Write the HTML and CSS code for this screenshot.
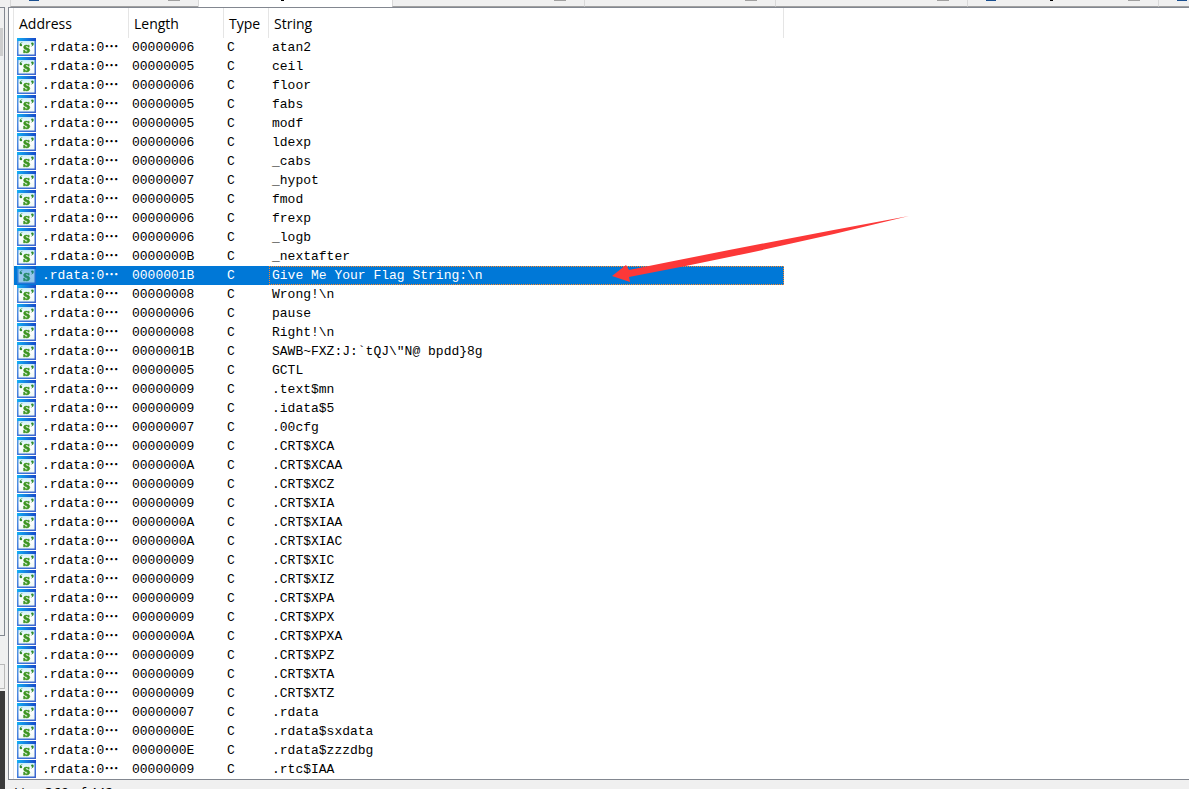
FILE: index.html
```html
<!DOCTYPE html>
<html lang="en">
<head>
    <meta charset="UTF-8">
    <meta name="viewport" content="width=device-width, initial-scale=1.0">
    <title>Strings window</title>
    <link rel="stylesheet" href="styles.css">
</head>
<body>
    <!-- the string icon, used by every row -->
    <svg class="defs" width="0" height="0">
        <defs>
            <linearGradient id="frame" x1="0" y1="0" x2="1" y2="1">
                <stop offset="0" stop-color="#5aa0e6"/>
                <stop offset="0.5" stop-color="#3f78dc"/>
                <stop offset="1" stop-color="#3a62cc"/>
            </linearGradient>
            <linearGradient id="bar" x1="0" y1="0" x2="1" y2="0">
                <stop offset="0" stop-color="#12b0f4"/>
                <stop offset="1" stop-color="#1848c8"/>
            </linearGradient>
            <linearGradient id="paper" x1="0" y1="0" x2="0" y2="1">
                <stop offset="0" stop-color="#c8ecf8"/>
                <stop offset="0.4" stop-color="#ffffff"/>
                <stop offset="1" stop-color="#eef8f4"/>
            </linearGradient>
            <symbol id="str" viewBox="0 0 19 19">
                <rect x="0" y="0" width="19" height="18" fill="url(#frame)"/>
                <rect x="0" y="0" width="19" height="3" fill="url(#bar)"/>
                <rect x="1.500" y="3" width="16" height="13.500" fill="url(#paper)"/>
                <path d="M12.200 9.300V7.200H11.400L11 7.500C8.500 6.500 6.600 7.500 6.600 9.300C6.600 12 10.500 11.300 10.500 13C10.500 14.200 8 14 7.500 12H6.600V14.900H7.400L7.900 14.500C10.500 15.500 12.800 14.500 12.800 12.300C12.800 9.600 8.700 10.300 8.700 8.800C8.700 7.700 10.900 7.700 11.400 9.300Z" fill="#3c9420" stroke="#3c9420" stroke-width="0.500"/>
                <path d="M5.300 4.200C3 4.800 2.300 6.300 2.700 7.600C3.200 8.800 5.300 8.500 5.200 7C5.100 6.200 4.500 5.900 4 6C4.200 5.200 4.700 4.800 5.500 4.600Z" fill="#2f8a2a"/>
                <path d="M14 8.600C16.300 8 17 6.500 16.600 5.200C16.100 4 14 4.300 14.100 5.800C14.200 6.600 14.800 6.900 15.300 6.800C15.100 7.600 14.600 8 13.800 8.200Z" fill="#2f8a2a"/>
            </symbol>
        </defs>
    </svg>

    <div class="tabs">
        <div class="tab first"><i class="mark"></i><i class="close"></i></div>
        <div class="tab active"><i class="tail"></i></div>
        <div class="tab"><i class="close"></i></div>
        <div class="tab"><i class="close"></i></div>
        <div class="tab"><i class="close"></i></div>
        <div class="tab titled"><i class="mark"></i><i class="tail"></i><i class="close"></i></div>
        <div class="tab last"><i class="mark"></i></div>
    </div>

    <div class="main">
        <div class="side">
            <div class="side-list"><div class="thumb"></div></div>
            <div class="side-box"></div>
            <div class="side-dark"></div>
        </div>
        <div class="view">
            <div class="panel">
                <table>
                    <colgroup>
                        <col class="c-address">
                        <col class="c-length">
                        <col class="c-type">
                        <col class="c-string">
                    </colgroup>
                    <thead>
                        <tr><th>Address</th><th>Length</th><th>Type</th><th>String</th></tr>
                    </thead>
                    <tbody id="rows"></tbody>
                </table>
                <svg class="arrow" viewBox="0 0 297 68">
                    <path d="M0 60L14 49L17 54Q150 27 297 0Q160 34 17 61L18 66Z" fill="#fc3838"/>
                </svg>
            </div>
            <div class="status">Line 369 of 442</div>
        </div>
    </div>

    <script>
        const strings = [
            ['00000006', 'atan2'],
            ['00000005', 'ceil'],
            ['00000006', 'floor'],
            ['00000005', 'fabs'],
            ['00000005', 'modf'],
            ['00000006', 'ldexp'],
            ['00000006', '_cabs'],
            ['00000007', '_hypot'],
            ['00000005', 'fmod'],
            ['00000006', 'frexp'],
            ['00000006', '_logb'],
            ['0000000B', '_nextafter'],
            ['0000001B', 'Give Me Your Flag String:\\n'],
            ['00000008', 'Wrong!\\n'],
            ['00000006', 'pause'],
            ['00000008', 'Right!\\n'],
            ['0000001B', 'SAWB~FXZ:J:`tQJ\\"N@ bpdd}8g'],
            ['00000005', 'GCTL'],
            ['00000009', '.text$mn'],
            ['00000009', '.idata$5'],
            ['00000007', '.00cfg'],
            ['00000009', '.CRT$XCA'],
            ['0000000A', '.CRT$XCAA'],
            ['00000009', '.CRT$XCZ'],
            ['00000009', '.CRT$XIA'],
            ['0000000A', '.CRT$XIAA'],
            ['0000000A', '.CRT$XIAC'],
            ['00000009', '.CRT$XIC'],
            ['00000009', '.CRT$XIZ'],
            ['00000009', '.CRT$XPA'],
            ['00000009', '.CRT$XPX'],
            ['0000000A', '.CRT$XPXA'],
            ['00000009', '.CRT$XPZ'],
            ['00000009', '.CRT$XTA'],
            ['00000009', '.CRT$XTZ'],
            ['00000007', '.rdata'],
            ['0000000E', '.rdata$sxdata'],
            ['0000000E', '.rdata$zzzdbg'],
            ['00000009', '.rtc$IAA']
        ];
        const selected = 12;

        const rows = document.getElementById('rows');
        strings.forEach(([length, text], i) => {
            const tr = document.createElement('tr');
            if (i === selected) tr.className = 'selected';
            tr.innerHTML = `
                <td><div class="address"><svg class="icon"><use href="#str"/></svg><span>.rdata:0<span class="dots" lang="zh-CN">…</span></span></div></td>
                <td>${length}</td>
                <td>C</td>
                <td class="text"></td>
            `;
            tr.querySelector('.text').textContent = text;
            rows.appendChild(tr);
        });
    </script>
</body>
</html>
```
FILE: styles.css
```css
* {
    box-sizing: border-box;
}
body {
    margin: 0;
    height: 100vh;
    display: flex;
    flex-direction: column;
    overflow: hidden;
    background-color: #f0f0f0;
    color: #000;
    font-family: "Open Sans", sans-serif;
    font-size: 14px;
}
.defs {
    position: absolute;
}

/* tab strip */
.tabs {
    display: flex;
    flex: none;
    height: 7px;
    padding-left: 10px;
}
.tab {
    display: flex;
    flex: 0 1 192px;
    padding: 0 18px;
    border-left: 1px solid #d9d9d9;
    border-bottom: 1px solid #a0a0a0;
}
.tab.first {
    flex-basis: 188px;
}
.tab.active {
    flex-basis: 195px;
    padding-right: 44px;
    background-color: #fff;
    border-bottom: none;
}
.tab.last {
    flex: 1 1 31px;
    padding: 0 0 0 18px;
}
.mark {
    width: 10px;
    height: 1px;
    background-color: #1a4f90;
}
.tail {
    width: 3px;
    height: 1px;
    margin: 0 auto;
    background-color: #000;
}
.close {
    width: 12px;
    height: 1px;
    margin-left: auto;
    background-color: #a0a0a0;
}
.titled .tail {
    margin-right: 75px;
}
.titled .close {
    margin-left: 0;
}

.main {
    display: flex;
    flex: 1;
    min-height: 0;
}
.side {
    display: flex;
    flex-direction: column;
    flex: none;
    width: 8px;
    padding-right: 3px;
}
.side-list {
    flex: 1;
    padding-top: 20px;
    border: 1px solid #828790;
    border-left: none;
}
.thumb {
    width: 3px;
    height: 28px;
    background-color: #cdcdcd;
}
.side-box {
    height: 25px;
    margin: 28px 0 2px;
    border: 1px solid #b9b9b9;
    border-left: none;
}
.side-dark {
    height: 98px;
    background-color: #3a3a3a;
}
.view {
    display: flex;
    flex: 1;
    flex-direction: column;
    min-width: 0;
}
.panel {
    position: relative;
    flex: 1;
    min-height: 0;
    overflow: hidden;
    padding-left: 4px;
    border: 1px solid #828790;
    border-right: none;
    background-color: #fff;
}

/* strings list */
table {
    width: 771px;
    border-collapse: separate;
    border-spacing: 0;
    border-left: 1px solid #e5e5e5;
    table-layout: fixed;
}
.c-address {
    width: 115px;
}
.c-length {
    width: 95px;
}
.c-type {
    width: 45px;
}
th {
    height: 30px;
    padding: 0 5px;
    border-right: 1px solid #e5e5e5;
    font-weight: normal;
    text-align: left;
}
td {
    height: 19px;
    padding: 1px 0 0 3px;
    font-family: "Liberation Mono", monospace;
    font-size: 13px;
    line-height: 18px;
    white-space: pre;
    vertical-align: bottom;
}
td:first-child {
    padding-top: 0;
}
.address {
    display: flex;
    gap: 6px;
    height: 19px;
    line-height: 20px;
}
.icon {
    width: 19px;
    height: 19px;
}
.dots {
    font-family: "Noto Sans CJK SC", sans-serif;
    font-size: 14px;
    font-weight: bold;
    line-height: 1;
}
.selected {
    background-color: #0078d7;
    color: #fff;
}
.selected .icon {
    opacity: 0.6;
}
.selected .text {
    padding: 0 0 0 2px;
    border: 1px dotted #ff8728;
    line-height: 17px;
}

/* arrow drawn over the selected row */
.arrow {
    position: absolute;
    left: 603px;
    top: 208px;
    width: 297px;
    height: 68px;
}

.status {
    height: 9px;
    padding: 3px 6px 0;
}
```
